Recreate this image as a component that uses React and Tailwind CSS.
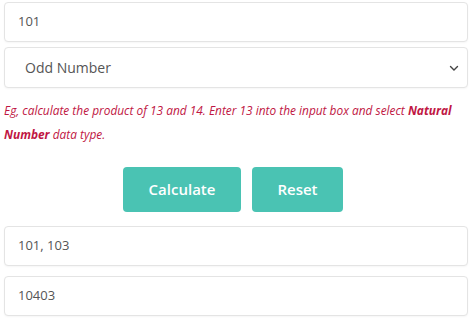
import React from "react";

const font = { fontFamily: '"Open Sans", "Liberation Sans", sans-serif' };

function Box({ children, className = "" }) {
  return (
    <div
      className={`flex items-center rounded-[4px] border border-[#e4e4e4] bg-white shadow-[0_1px_2px_rgba(0,0,0,0.04)] ${className}`}
    >
      {children}
    </div>
  );
}

export default function App() {
  return (
    <div
      className="w-[474px] h-[323px] bg-white pl-[4px] pr-[6px] pt-[2px] text-[#555]"
      style={font}
    >
      <Box className="h-[40px] pl-[13px] text-[13px] text-[#555]">101</Box>
      <Box className="mt-[5px] h-[41px] justify-between pl-[20px] pr-[8px] text-[14px] text-[#555]">
        <span>Odd Number</span>
        <svg width="10" height="8" viewBox="0 0 10 8" className="mt-[1px]">
          <path d="M1.5 2.5 L5 6 L8.5 2.5" fill="none" stroke="#444" strokeWidth="1.4" strokeLinecap="round" />
        </svg>
      </Box>
      <p className="mt-[11px] text-[11.9px] leading-[23.5px] italic text-[#c01643]">
        Eg, calculate the product of 13 and 14. Enter 13 into the input box and select{" "}
        <b className="font-bold">Natural</b> <b className="font-bold">Number</b> data type.
      </p>
      <div className="mt-[21px] flex justify-center gap-[11px] pr-[6px]">
        <button className="h-[45px] w-[118px] rounded-[4px] bg-[#4ac3b3] text-[15px] font-semibold text-white">
          Calculate
        </button>
        <button className="h-[45px] w-[91px] rounded-[4px] bg-[#4ac3b3] text-[15px] font-semibold text-white">
          Reset
        </button>
      </div>
      <Box className="mt-[14px] h-[40px] pl-[13px] text-[13px] text-[#555]">101, 103</Box>
      <Box className="mt-[10px] h-[40px] pl-[13px] text-[13px] text-[#555]">10403</Box>
    </div>
  );
}
